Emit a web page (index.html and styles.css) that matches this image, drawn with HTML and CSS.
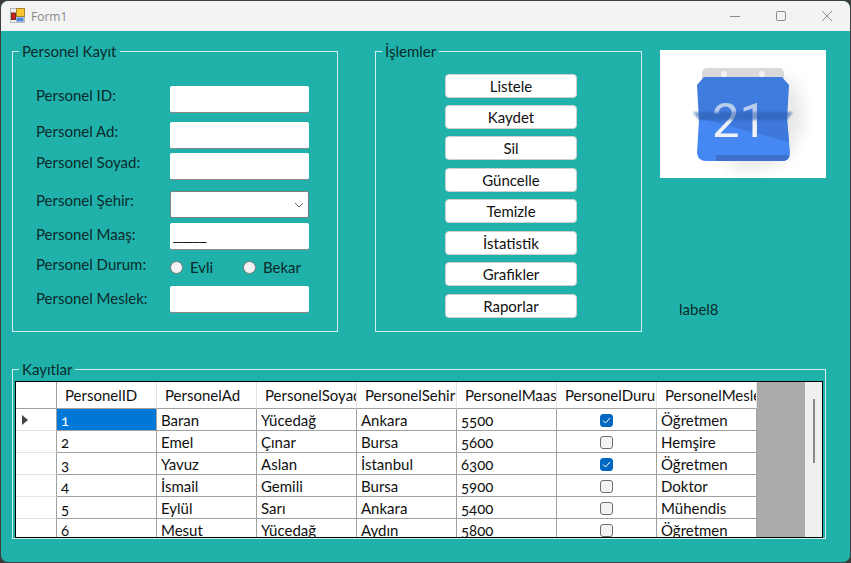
FILE: index.html
```html
<!DOCTYPE html>
<html lang="en">
<head>
  <meta charset="UTF-8" />
  <title>Form1</title>
  <link rel="stylesheet" href="styles.css">
</head>
<body>
  <div class="window">
    <div class="titlebar">
      <svg class="app-icon" width="16" height="16" viewBox="0 0 16 16">
        <rect x="0.5" y="0.5" width="14" height="14" fill="#eee" stroke="#bbb"/>
        <rect x="6.5" y="0.5" width="8" height="8" fill="#fbc52e" stroke="#a8842c"/>
        <rect x="1.5" y="5" width="4" height="6.5" fill="#c8201c" stroke="#7c2b28"/>
        <rect x="6.5" y="9.5" width="7" height="4" fill="#4a86dc" stroke="#9db9e0"/>
      </svg>
      <span class="title-text">Form1</span>
      <div class="win-buttons">
        <div class="win-btn"><svg width="12" height="12" viewBox="0 0 12 12"><path d="M1 6.5H11" stroke="#8a8a8a" fill="none"/></svg></div>
        <div class="win-btn"><svg width="12" height="12" viewBox="0 0 12 12"><rect x="1.5" y="1.5" width="9" height="9" rx="1.5" stroke="#8a8a8a" fill="none"/></svg></div>
        <div class="win-btn"><svg width="12" height="12" viewBox="0 0 12 12"><path d="M1 1L11 11M11 1L1 11" stroke="#8a8a8a" fill="none"/></svg></div>
      </div>
    </div>

    <div class="form-body">
      <div class="top-row">
        <fieldset class="group group-kayit">
          <legend>Personel Kayıt</legend>
          <div class="fields">
            <label>Personel ID:</label>
            <input type="text" class="textbox" />
            <label>Personel Ad:</label>
            <input type="text" class="textbox" />
            <label>Personel Soyad:</label>
            <input type="text" class="textbox" />
            <label>Personel Şehir:</label>
            <div class="combo">
              <svg width="10" height="6" viewBox="0 0 10 6"><path d="M1 1L5 5L9 1" stroke="#666" fill="none"/></svg>
            </div>
            <label class="label-maas">Personel Maaş:</label>
            <input type="text" class="textbox masked" value="_____" />
            <label class="label-durum">Personel Durum:</label>
            <div class="radios">
              <span class="radio"></span><span class="radio-text evli">Evli</span>
              <span class="radio"></span><span class="radio-text">Bekar</span>
            </div>
            <label class="label-meslek">Personel Meslek:</label>
            <input type="text" class="textbox" />
          </div>
        </fieldset>

        <fieldset class="group group-islem">
          <legend>İşlemler</legend>
          <div class="actions">
            <button>Listele</button>
            <button>Kaydet</button>
            <button>Sil</button>
            <button>Güncelle</button>
            <button>Temizle</button>
            <button>İstatistik</button>
            <button>Grafikler</button>
            <button>Raporlar</button>
          </div>
        </fieldset>

        <div class="side">
          <div class="picture">
            <svg width="166" height="128" viewBox="0 0 166 128">
              <defs>
                <filter id="soft" x="-30%" y="-30%" width="160%" height="160%"><feGaussianBlur stdDeviation="8"/></filter>
                <filter id="wing" x="-10%" y="-50%" width="120%" height="200%"><feGaussianBlur stdDeviation="1.2"/></filter>
                <filter id="tiny" x="-5%" y="-5%" width="110%" height="110%"><feGaussianBlur stdDeviation="0.5"/></filter>
              </defs>
              <path d="M70 30H135L145 70L130 105Q105 125 70 118Z" fill="#000" opacity="0.09" filter="url(#soft)"/>
              <g filter="url(#tiny)">
                <rect x="42" y="18" width="82" height="16" rx="5" fill="#d9d9d9"/>
                <circle cx="64" cy="24" r="3" fill="#f2f2f2"/>
                <circle cx="102" cy="24" r="3" fill="#f2f2f2"/>
                <path d="M44 27H122L129 35L127 70H39L37 35Z" fill="#3f7bdd"/>
                <path d="M39 70H127L130 103Q130 111 122 111H46Q38 111 37 103Z" fill="#4587f3"/>
                <path d="M39 68H127L129 92Z" fill="#3d78da"/>
                <path d="M56 105H129Q129 111 122 111H56Z" fill="#3e70c8"/>
                <text x="52" y="87" class="cal-day">21</text>
              </g>
              <rect x="40" y="50" width="86" height="13" fill="#3f7bdd" opacity="0.3"/>
              <path d="M33 62H133L127 70H39Z" fill="#2f5fb0" opacity="0.6" filter="url(#wing)"/>
            </svg>
          </div>
          <div class="label8">label8</div>
        </div>
      </div>

      <fieldset class="group group-records">
        <legend>Kayıtlar</legend>
        <div class="grid-box">
          <table class="grid">
            <thead>
              <tr>
                <th class="head-col"></th>
                <th>PersonelID</th><th>PersonelAd</th><th>PersonelSoyad</th><th>PersonelSehir</th>
                <th>PersonelMaas</th><th>PersonelDurum</th><th>PersonelMeslek</th>
              </tr>
            </thead>
            <tbody>
              <tr>
                <td class="head-col"><svg class="row-arrow" width="6" height="10" viewBox="0 0 6 10"><path d="M0 0L6 5L0 10Z" fill="#444"/></svg></td>
                <td class="selected">1</td><td>Baran</td><td>Yücedağ</td><td>Ankara</td><td>5500</td>
                <td class="center"><span class="check on"><svg width="9" height="7" viewBox="0 0 9 7"><path d="M1 3.5L3.5 6L8 1" stroke="#fff" fill="none"/></svg></span></td><td>Öğretmen</td>
              </tr>
              <tr>
                <td class="head-col"></td>
                <td>2</td><td>Emel</td><td>Çınar</td><td>Bursa</td><td>5600</td>
                <td class="center"><span class="check"></span></td><td>Hemşire</td>
              </tr>
              <tr>
                <td class="head-col"></td>
                <td>3</td><td>Yavuz</td><td>Aslan</td><td>İstanbul</td><td>6300</td>
                <td class="center"><span class="check on"><svg width="9" height="7" viewBox="0 0 9 7"><path d="M1 3.5L3.5 6L8 1" stroke="#fff" fill="none"/></svg></span></td><td>Öğretmen</td>
              </tr>
              <tr>
                <td class="head-col"></td>
                <td>4</td><td>İsmail</td><td>Gemili</td><td>Bursa</td><td>5900</td>
                <td class="center"><span class="check"></span></td><td>Doktor</td>
              </tr>
              <tr>
                <td class="head-col"></td>
                <td>5</td><td>Eylül</td><td>Sarı</td><td>Ankara</td><td>5400</td>
                <td class="center"><span class="check"></span></td><td>Mühendis</td>
              </tr>
              <tr>
                <td class="head-col"></td>
                <td>6</td><td>Mesut</td><td>Yücedağ</td><td>Aydın</td><td>5800</td>
                <td class="center"><span class="check"></span></td><td>Öğretmen</td>
              </tr>
            </tbody>
          </table>
          <div class="grid-empty"></div>
          <div class="scrollbar"><div class="thumb"></div></div>
        </div>
      </fieldset>
    </div>
  </div>
</body>
</html>
```

FILE: styles.css
```css
* {
  box-sizing: border-box;
}
html, body {
  height: 100%;
}
body {
  margin: 0;
  background: #3c3c3c;
  font-family: 'Lato', 'Open Sans', sans-serif;
  font-size: 15px;
  color: #0a2a2a;
}
.window {
  height: 563px;
  border: 1px solid #3f3f3f;
  border-radius: 8px;
  overflow: hidden;
  background: #20b2aa;
}
.titlebar {
  display: flex;
  align-items: center;
  height: 30px;
  padding-left: 9px;
  background: #f3f3f3;
}
.app-icon {
  margin-right: 5px;
}
.title-text {
  font-family: 'Open Sans', sans-serif;
  font-size: 12px;
  color: #8a8a8a;
}
.win-buttons {
  display: flex;
  margin-left: auto;
}
.win-btn {
  display: flex;
  align-items: center;
  justify-content: center;
  width: 46px;
  height: 30px;
}
.form-body {
  padding: 11px 0 0 11px;
}
.top-row {
  display: flex;
}
.group {
  margin: 0;
  padding: 0;
  min-width: 0;
  border: 1px solid #d3eeec;
}
.group legend {
  margin-left: 6px;
  padding: 0 3px;
  line-height: 19px;
}
.group-kayit {
  width: 326px;
  height: 290px;
}
.fields {
  display: grid;
  grid-template-columns: 134px 139px;
  grid-template-rows: 36px 31px 38px 32px 34px 29px 27px;
  margin: 25px 0 0 23px;
}
.fields label {
  line-height: 18px;
}
.fields .label-maas {
  margin-top: 2px;
}
.fields .label-durum {
  margin-top: -2px;
}
.fields .label-meslek {
  margin-top: 3px;
}
.textbox {
  display: block;
  width: 139px;
  height: 27px;
  padding: 0 2px;
  border: 0;
  border-bottom: 1px solid #8a8a8a;
  border-radius: 2px;
  background: #fff;
  font: inherit;
  color: #000;
}
.textbox.masked {
  padding-left: 3px;
  font-family: 'Liberation Sans', sans-serif;
  font-size: 12px;
}
.combo {
  display: flex;
  align-items: center;
  justify-content: flex-end;
  height: 27px;
  padding-right: 4px;
  border: 1px solid #7d7d7d;
  border-radius: 2px;
  background: #fff;
}
.radios {
  display: flex;
  align-items: center;
  height: 20px;
}
.radio {
  width: 13px;
  height: 13px;
  border: 1px solid #777;
  border-radius: 50%;
  background: #f3f3f3;
}
.radio-text {
  margin-left: 7px;
}
.radio-text.evli {
  width: 53px;
}
.group-islem {
  width: 267px;
  height: 290px;
  margin-left: 37px;
}
.actions {
  display: flex;
  flex-direction: column;
  gap: 7.43px;
  width: 132px;
  margin: 12.6px 0 0 69px;
}
.actions button {
  height: 24px;
  padding: 0;
  border: 1px solid #cfcfcf;
  border-radius: 4px;
  background: #fff;
  font: inherit;
  color: #111;
}
.side {
  margin-left: 18px;
  padding-top: 8px;
}
.picture {
  width: 166px;
  height: 128px;
  background: #fff;
}
.picture svg {
  display: block;
}
.cal-day {
  font-family: 'Roboto', sans-serif;
  font-weight: 400;
  font-size: 49px;
  fill: #eef1f6;
}
.label8 {
  margin: 121px 0 0 19px;
  line-height: 20px;
}
.group-records {
  width: 814px;
  height: 179px;
  margin-top: 28px;
}
.grid-box {
  display: flex;
  width: 808px;
  height: 157px;
  margin: 2px 0 0 2px;
  border: 1px solid #000;
  overflow: hidden;
  background: #ababab;
}
.grid {
  flex: none;
  width: 741px;
  table-layout: fixed;
  border-collapse: separate;
  border-spacing: 0;
  background: #fff;
  color: #111;
}
.grid th, .grid td {
  width: 100px;
  padding: 0 2px 0 4px;
  overflow: hidden;
  white-space: nowrap;
  text-align: left;
  font-weight: 400;
  border-right: 1px solid #a0a0a0;
  border-bottom: 1px solid #a0a0a0;
}
.grid th {
  height: 27px;
  padding-left: 8px;
  border-right-color: #e4e4e4;
  border-bottom-color: #a0a0a0;
}
.grid td {
  height: 22px;
  font-variant-numeric: oldstyle-nums;
}
.grid .head-col {
  width: 41px;
  padding: 0;
  border-bottom-color: #e4e4e4;
  border-right-color: #a0a0a0;
}
.grid th.head-col {
  border-bottom-color: #a0a0a0;
}
.row-arrow {
  display: block;
  margin: 0 0 0 6px;
}
.grid .selected {
  background: #0078d7;
  color: #fff;
}
.grid .center {
  padding: 0 0 2px;
  text-align: center;
}
.check {
  display: inline-flex;
  align-items: center;
  justify-content: center;
  width: 13px;
  height: 13px;
  vertical-align: middle;
  border: 1px solid #6e6e6e;
  border-radius: 3px;
  background: #f3f3f3;
}
.check.on {
  border-color: #0067c0;
  background: #0067c0;
}
.grid-empty {
  flex: 1;
}
.scrollbar {
  flex: none;
  width: 17px;
  padding: 17px 0 0 8px;
  background: #efefef;
}
.thumb {
  width: 2px;
  height: 64px;
  background: #8a8a8a;
}
```
